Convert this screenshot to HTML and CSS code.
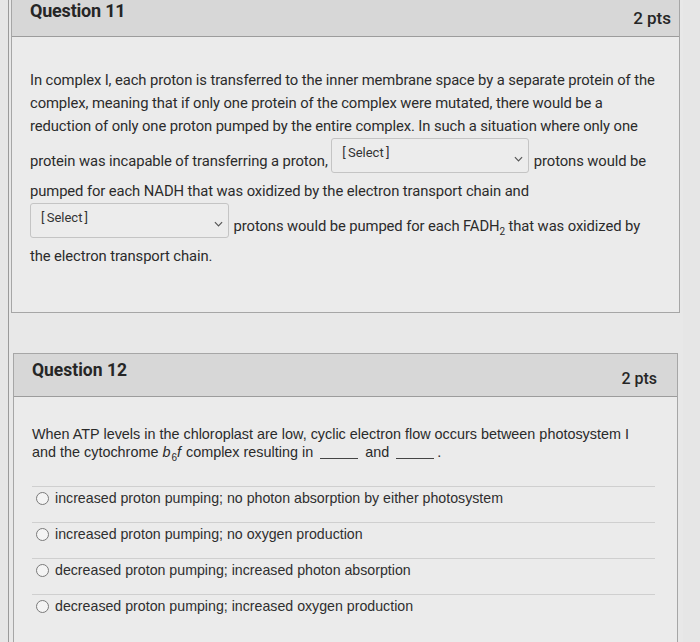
FILE: index.html
```html
<!DOCTYPE html>
<html>
<head>
<meta charset="utf-8">
<link rel="stylesheet" href="styles.css">
</head>
<body>
<div class="page">
  <section class="card q11">
    <header class="card-head">
      <h2 class="q-title">Question 11</h2>
      <span class="pts">2 pts</span>
    </header>
    <div class="card-body">
      <p class="q-text">In complex I, each proton is transferred to the inner membrane space by a separate protein of the complex, meaning that if only one protein of the complex were mutated, there would be a reduction of only one proton pumped by the entire complex. In such a situation where only one protein was incapable of transferring a proton, <span class="select sel1"><span class="sel-inner"><span class="sel-label">[ Select ]</span><svg class="chev" viewBox="0 0 10 6" width="9" height="6"><path d="M1 1 L5 5 L9 1" fill="none" stroke="#555" stroke-width="1.3"/></svg></span></span> protons would be pumped for each NADH that was oxidized by the electron transport chain and <span class="select sel2"><span class="sel-inner"><span class="sel-label">[ Select ]</span><svg class="chev" viewBox="0 0 10 6" width="9" height="6"><path d="M1 1 L5 5 L9 1" fill="none" stroke="#555" stroke-width="1.3"/></svg></span></span> protons would be pumped for each FADH<sub>2</sub> that was oxidized by the electron transport chain.</p>
    </div>
  </section>

  <section class="card q12">
    <header class="card-head head12">
      <h2 class="q-title">Question 12</h2>
      <span class="pts">2 pts</span>
    </header>
    <div class="card-body body12">
      <p class="q-text12">When ATP levels in the chloroplast are low, cyclic electron flow occurs between photosystem I and the cytochrome <i class="bf">b</i><sub>6</sub><i class="bf">f</i> complex resulting in <span class="blank"></span> and <span class="blank"></span>.</p>
      <ul class="answers">
        <li class="answer"><span class="radio"></span>increased proton pumping; no photon absorption by either photosystem</li>
        <li class="answer"><span class="radio"></span>increased proton pumping; no oxygen production</li>
        <li class="answer"><span class="radio"></span>decreased proton pumping; increased photon absorption</li>
        <li class="answer"><span class="radio"></span>decreased proton pumping; increased oxygen production</li>
      </ul>
    </div>
  </section>
</div>
</body>
</html>
```
FILE: styles.css
```css
html, body {
  margin: 0;
  padding: 0;
  background: #e6e6e6;
}
body {
  font-family: Roboto, "Liberation Sans", sans-serif;
  color: #2e2e2e;
  height: 642px;
  overflow: hidden;
}
.page {
  margin-left: 8px;
  border-left: 1px solid #9a9a9a;
  padding-left: 2px;
  width: 672px;
  min-height: 642px;
  background: #e8e8e8;
}
.card {
  border: 1px solid #a6a6a6;
  background: #ebebeb;
}
.q11 {
  width: 667px;
  border-top: none;
}
.card-head {
  display: flex;
  justify-content: space-between;
  align-items: flex-start;
  background: #d7d7d7;
  border-bottom: 1px solid #9c9c9c;
  height: 36px;
  padding: 0 8px 0 18px;
}
.q-title {
  margin: 0;
  font-size: 18px;
  font-weight: 700;
  line-height: 22px;
  color: #262626;
  font-family: Roboto, sans-serif;
  letter-spacing: -0.2px;
}
.pts {
  font-size: 17px;
  font-weight: 500;
  margin-top: 8px;
  color: #262626;
}
.card-body {
  padding: 32px 18px 44px 18px;
}
.q-text {
  margin: 0;
  font-size: 14.8px;
  letter-spacing: -0.1px;
  line-height: 23px;
  color: #2b2b2b;
}
.q-text sub {
  font-size: 10px;
  line-height: 0;
}
.select {
  display: inline-block;
  box-sizing: border-box;
  height: 35px;
  border: 1px solid #c4c4c4;
  border-radius: 3px;
  background: #ececec;
  overflow: hidden;
  margin-bottom: 7px;
  vertical-align: -14px;
  letter-spacing: 0;
}
.sel-inner {
  display: flex;
  justify-content: space-between;
  align-items: flex-start;
  padding: 6px 5px 0 10px;
}
.sel1 { width: 198px; margin-right: 1px; }
.sel2 { width: 199px; margin-right: 1px; }
.sel-label {
  font-size: 13px;
  line-height: 16px;
  color: #333;
  word-spacing: -1px;
}
.chev {
  margin-top: 11px;
}
.q12 {
  margin-top: 40px;
  width: 663px;
  margin-left: 2px;
}
.head12 {
  padding-top: 5px;
  box-sizing: border-box;
  height: 43px;
}
.head12 .q-title { font-size: 17.5px; letter-spacing: 0; }
.head12 .pts { font-size: 16px; margin-top: 10px; margin-right: 12px; }
.body12 {
  padding: 28px 22px 12px 18px;
  font-family: "Liberation Sans", Arial, sans-serif;
}
.q-text12 {
  margin: 0 20px 0 0;
  font-size: 14.4px;
  line-height: 18px;
  color: #2a2a2a;
}
.q-text12 sub {
  font-size: 10px;
  line-height: 0;
}
.bf { padding-right: 1px; }
.blank {
  display: inline-block;
  width: 38px;
  border-bottom: 1px solid #444;
  vertical-align: -2px;
  margin: 0 3px;
}
.answers {
  list-style: none;
  margin: 25px 0 0 0;
  padding: 0;
}
.answer {
  display: flex;
  align-items: center;
  border-top: 1px solid #cfcfcf;
  padding-bottom: 13px;
  height: 22px;
  font-size: 14.2px;
  color: #2f2f2f;
  padding-left: 4px;
}
.radio {
  width: 11px;
  height: 11px;
  border: 1px solid #7a7a7a;
  border-radius: 50%;
  background: #f4f4f4;
  margin-right: 6px;
  flex: none;
}
```
